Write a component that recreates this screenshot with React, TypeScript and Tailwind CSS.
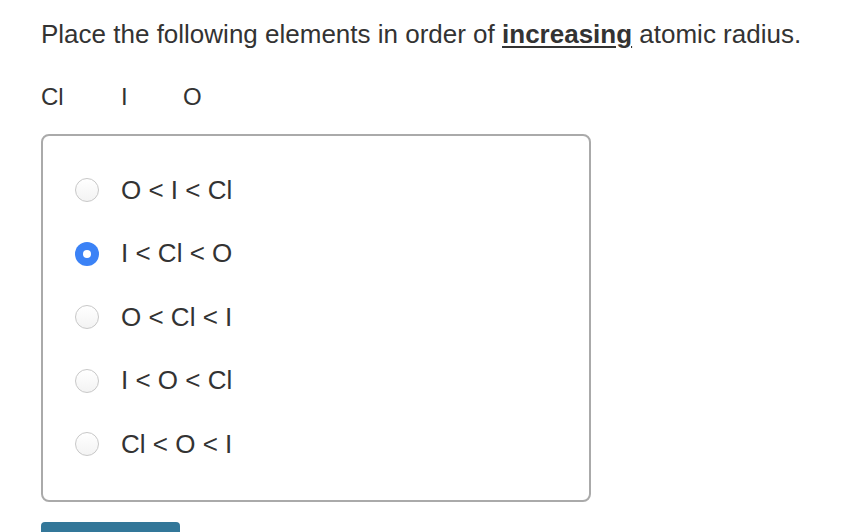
import React, { useState } from 'react';

const options = ['O < I < Cl', 'I < Cl < O', 'O < Cl < I', 'I < O < Cl', 'Cl < O < I'];

const Radio: React.FC<{ checked: boolean }> = ({ checked }) =>
  checked ? (
    <span className="w-[24px] h-[24px] rounded-full bg-[#3b82f6] flex items-center justify-center shrink-0">
      <span className="w-[8px] h-[8px] rounded-full bg-white"></span>
    </span>
  ) : (
    <span className="w-[24px] h-[24px] rounded-full border border-[#c8c8c8] bg-gradient-to-b from-white to-[#f3f3f3] shrink-0"></span>
  );

export default function App() {
  const [selected, setSelected] = useState(1);

  return (
    <div className="w-[860px] h-[532px] overflow-hidden bg-white text-[#333] font-['Helvetica','Liberation_Sans',Arial,sans-serif] pl-[41px] pt-[15px]">
      <p className="text-[26px] leading-[38px]">
        Place the following elements in order of <span className="font-bold underline underline-offset-[3px] decoration-2">increasing</span> atomic radius.
      </p>

      {/* element symbols */}
      <div className="flex text-[24px] leading-[36px] mt-[26px]">
        <span className="w-[80px]">Cl</span>
        <span className="w-[62px]">I</span>
        <span>O</span>
      </div>

      <div className="mt-[19px] w-[550px] h-[368px] border-2 border-[#aaaaaa] rounded-[8px] pl-[32px] pt-[39px]">
        {options.map((opt, i) => (
          <button
            key={opt}
            onClick={() => setSelected(i)}
            className="flex items-center h-[30px] mb-[33.5px] text-[26px]"
          >
            <Radio checked={selected === i} />
            <span className="ml-[22px] whitespace-pre">{opt}</span>
          </button>
        ))}
      </div>

      <div className="mt-[20px] w-[139px] h-[40px] bg-[#337799] rounded-t-[4px]"></div>
    </div>
  );
}
